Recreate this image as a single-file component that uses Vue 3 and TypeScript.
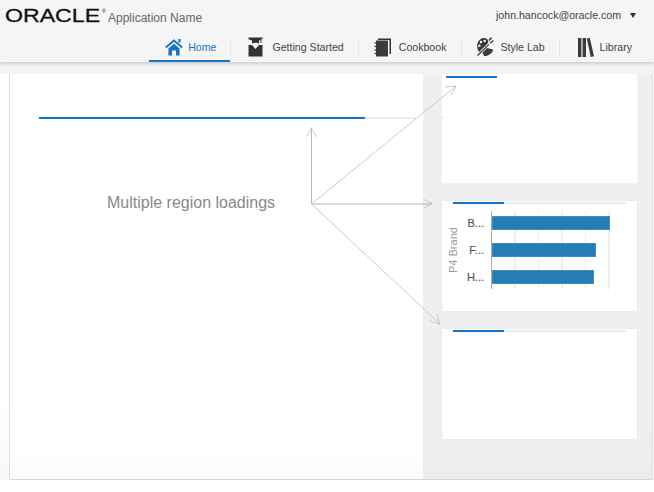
<script setup lang="ts">
interface NavItem { label: string; icon: string; active?: boolean }
const nav: NavItem[] = [
  { label: 'Home', icon: 'home', active: true },
  { label: 'Getting Started', icon: 'grad' },
  { label: 'Cookbook', icon: 'book' },
  { label: 'Style Lab', icon: 'palette' },
  { label: 'Library', icon: 'library' },
]
const bars = [
  { label: 'B...', width: 118 },
  { label: 'F...', width: 104 },
  { label: 'H...', width: 102 },
]
</script>

<template>
  <div class="page">
    <header class="header">
      <div class="top">
        <div class="brand">
          <span class="logo-box"><span class="logo">ORACLE</span><span class="reg">®</span></span>
          <span class="app-name">Application Name</span>
        </div>
        <div class="user">
          <span>john.hancock@oracle.com</span>
          <span class="caret"></span>
        </div>
      </div>
      <nav class="nav">
        <template v-for="(item, i) in nav" :key="item.label">
          <span v-if="i > 0" class="sep"></span>
          <a class="nav-item" :class="[item.icon, { active: item.active }]">
            <svg v-if="item.icon === 'home'" class="ico" width="18" height="18" viewBox="0 0 18 18">
              <path d="M0.8 9.4 L9 2.6 L17.2 9.4" fill="none" stroke="#1a73c8" stroke-width="2" />
              <path d="M3.4 10.4 L9 5.8 L14.6 10.4 V17.6 H11 V12.4 H7 V17.6 H3.4 Z" fill="#1a73c8" />
              <path d="M13.4 1 h2.2 v3.4 h-2.2 z" fill="#1a73c8" />
            </svg>
            <svg v-else-if="item.icon === 'grad'" class="ico" width="15" height="20" viewBox="0 0 15 20">
              <path d="M0.5 0.5 H14.5 V2 H13.5 V6 H12.5 V3 L11 3.6 V6.4 C9 5.4 6 5.4 4 6.4 V3.6 L0.5 2.200 Z" fill="#333" />
              <path d="M0.5 8 H4 L7.5 12 L11 8 H14.5 V19.5 H0.5 Z" fill="#333" />
            </svg>
            <svg v-else-if="item.icon === 'book'" class="ico" width="18" height="19" viewBox="0 0 18 19">
              <path d="M4 0.5 H17 V16 H15.5 V2 H4 Z" fill="#333" />
              <rect x="2" y="2.6" width="12" height="16" rx="0.5" fill="#3c3c3c" />
              <g fill="none" stroke="#333" stroke-width="1.2">
                <path d="M0.5 5 H4" /><path d="M0.5 8.5 H4" /><path d="M0.5 12 H4" /><path d="M0.5 15.5 H4" />
              </g>
            </svg>
            <svg v-else-if="item.icon === 'palette'" class="ico" width="18" height="20" viewBox="0 0 18 20">
              <path d="M7 1 C11 0.5 13 3 12 6 L10 8.5 L3 15 C0.5 12 -0.5 3 7 1 Z" fill="#3a3a3a" />
              <path d="M8 19 C12 19.5 17 16 17 12.5 L11 11 L6.5 15.5 Z" fill="#3a3a3a" />
              <circle cx="5" cy="5" r="1.2" fill="#f5f5f5" />
              <circle cx="8.6" cy="4" r="1.2" fill="#f5f5f5" />
              <circle cx="3.4" cy="8.8" r="1.2" fill="#f5f5f5" />
              <path d="M1.5 18.5 L13 7" stroke="#f5f5f5" stroke-width="2.4" />
              <path d="M1.5 18.5 L13 7.4" stroke="#3a3a3a" stroke-width="1.2" />
              <path d="M14 6 L17.5 3.5 M13 3.5 L15.500 0.5" stroke="#3a3a3a" stroke-width="1.5" />
            </svg>
            <svg v-else class="ico" width="16" height="19" viewBox="0 0 16 19">
              <rect x="0" y="0" width="3.4" height="19" fill="#3a3a3a" />
              <rect x="4.6" y="0" width="3.4" height="19" fill="#3a3a3a" />
              <path d="M8.8 0.6 L11.8 0 L16 18.2 L12.8 19 Z" fill="#3a3a3a" />
            </svg>
            <span>{{ item.label }}</span>
          </a>
        </template>
      </nav>
    </header>

    <div class="band"></div>

    <main class="content">
      <section class="main-panel">
        <div class="progress main-progress"><span class="fill"></span></div>
        <p class="caption">Multiple region loadings</p>
      </section>
      <aside class="side">
        <div class="card first">
          <div class="progress first-progress"><span class="fill"></span></div>
        </div>
        <div class="card">
          <div class="progress"><span class="fill"></span></div>
          <div class="chart">
            <span class="axis-title">P4 Brand</span>
            <div class="labels">
              <span v-for="b in bars" :key="b.label">{{ b.label }}</span>
            </div>
            <div class="plot">
              <span v-for="b in bars" :key="b.label" class="bar" :style="{ width: b.width + 'px' }"></span>
            </div>
          </div>
        </div>
        <div class="card">
          <div class="progress"><span class="fill"></span></div>
        </div>
      </aside>
    </main>

    <svg class="arrows" width="654" height="492" viewBox="0 0 654 492" fill="none" stroke="#b5b5b5">
      <path d="M311.5 204 V127.500" stroke-width="1" />
      <path d="M306.500 137 L311.500 128 L316.500 137" stroke-width="0.7" />
      <path d="M311.500 204 L456 86" stroke-width="0.7" />
      <path d="M445 87 L456 86 L451 95" stroke-width="0.7" />
      <path d="M311.500 204 H432" stroke-width="1" />
      <path d="M423 199 L432 203.500 L423 208.500" stroke-width="0.7" />
      <path d="M311.500 204 L440 324" stroke-width="0.7" />
      <path d="M429 321 L440 324 L437 314" stroke-width="0.7" />
      <path d="M441 118 H444" stroke="#ececec" stroke-width="2" />
    </svg>
  </div>
</template>

<style>
html, body { margin: 0; background: #fff; }
</style>

<style scoped>
.page {
  position: relative;
  width: 654px;
  height: 492px;
  overflow: hidden;
  background: linear-gradient(to bottom, #fff 0, #fff 400px, #f8f8f8 480px, #fff 480px);
  font-family: "Liberation Sans", Arial, sans-serif;
  display: flex;
  flex-direction: column;
}
.header {
  height: 62px;
  flex: none;
  background: #f5f5f5;
  box-shadow: 0 1px 4px rgba(0, 0, 0, 0.22);
  position: relative;
  z-index: 1;
}
.top {
  height: 32px;
  display: flex;
  justify-content: space-between;
  padding: 0 18px 0 6px;
}
.brand { display: flex; align-items: flex-start; }
.logo-box { width: 102px; height: 32px; position: relative; flex: none; }
.logo {
  display: block;
  margin: 5px 0 0 -1px;
  font-size: 18.500px;
  line-height: 22px;
  color: #111;
  transform: scaleX(1.25);
  transform-origin: left center;
  -webkit-text-stroke: 0.3px #111;
}
.reg {
  position: absolute;
  left: 96px;
  top: 8px;
  font-size: 5px;
  line-height: 6px;
  color: #222;
}
.app-name {
  margin-top: 11px;
  font-size: 12px;
  line-height: 14px;
  color: #666;
}
.user {
  display: flex;
  align-items: flex-start;
  gap: 9px;
  padding-top: 9px;
  font-size: 10.600px;
  line-height: 13px;
  color: #444;
}
.caret {
  margin-top: 4px;
  width: 0;
  height: 0;
  border-left: 3.5px solid transparent;
  border-right: 3.5px solid transparent;
  border-top: 5px solid #333;
}
.nav {
  height: 30px;
  display: flex;
  align-items: center;
  justify-content: flex-end;
  padding-right: 8px;
}
.nav-item {
  height: 30px;
  box-sizing: border-box;
  padding: 0 14px;
  display: flex;
  align-items: center;
  font-size: 10.600px;
  color: #444;
}
.ico { flex: none; display: block; }
.nav-item.home { padding-left: 16px; }
.nav-item.home .ico { margin-right: 5px; }
.nav-item.grad { padding-left: 17px; }
.nav-item.grad .ico { margin-right: 9px; }
.nav-item.book { padding: 0 15px; }
.nav-item.book .ico { margin-right: 7px; }
.nav-item.palette { padding-left: 14px; }
.nav-item.palette .ico { margin-right: 6px; }
.nav-item.library { padding-left: 18px; }
.nav-item.library .ico { margin-right: 6px; }
.nav-item.active {
  color: #1a73c8;
  box-shadow: inset 0 -2px 0 #1a73c8;
}
.sep { width: 1px; height: 18px; background: #e6e6e6; flex: none; }
.band {
  height: 12px;
  flex: none;
  background: repeating-linear-gradient(45deg, #f4f4f4 0 1px, #f1f1f1 1px 2px);
}
.content {
  height: 406px;
  flex: none;
  margin-left: 9px;
  width: 644px;
  box-sizing: border-box;
  display: flex;
  border-left: 1px solid #ddd;
  border-right: 1px solid #ddd;
  border-bottom: 1px solid #d6d6d6;
  border-radius: 0 0 2px 2px;
}
.main-panel {
  width: 413px;
  flex: none;
  box-sizing: border-box;
  padding: 43px 7px 0 29px;
  background: linear-gradient(to bottom, #fff 0, #fff 94%, #fbfbfb 100%);
}
.progress {
  height: 2px;
  background: #ececec;
  display: flex;
}
.fill { display: block; height: 2px; background: #1375d1; }
.main-progress .fill { width: 326px; }
.caption {
  margin: 75px 0 0 68px;
  font-size: 16px;
  line-height: 18px;
  color: #888;
}
.side {
  flex: 1;
  box-sizing: border-box;
  padding: 0 14px 0 18px;
  display: flex;
  flex-direction: column;
  gap: 16px;
  background: linear-gradient(to bottom, #efefef 0, #efefef 94%, #ebebeb 100%);
}
.card {
  height: 112px;
  flex: none;
  box-sizing: border-box;
  background: #fff;
  border: 1px solid #ebebeb;
  border-radius: 2px;
  padding: 1px 11px 0;
}
.card.first {
  height: 110px;
  border-top: 0;
  border-color: #f5f1ee;
  padding: 2px 4px 0;
}
.first-progress { background: transparent; }
.first-progress .fill { width: 50px; }
.card .fill { width: 51px; }
.chart {
  display: flex;
  align-items: flex-start;
  height: 90px;
  margin-top: 7px;
}
.axis-title {
  writing-mode: vertical-rl;
  transform: rotate(180deg);
  width: 14px;
  height: 78px;
  text-align: center;
  font-size: 11px;
  line-height: 14px;
  color: #999;
  flex: none;
  margin-left: -7px;
}
.labels {
  flex: none;
  width: 24px;
  box-sizing: border-box;
  padding-top: 5px;
  display: flex;
  flex-direction: column;
  gap: 13px;
  text-align: right;
  font-size: 11px;
  line-height: 14px;
  color: #555;
  -webkit-text-stroke: 0.2px #555;
}
.plot {
  margin-left: 7px;
  width: 119px;
  height: 78px;
  flex: none;
  box-sizing: border-box;
  padding-top: 5px;
  border-left: 1px solid #a8a8a8;
  display: flex;
  flex-direction: column;
  gap: 13px;
  background: repeating-linear-gradient(to right, transparent 0 22px, #eeeef2 22px 23.5px);
}
.bar {
  display: block;
  height: 14px;
  flex: none;
  background: #267db3;
  box-shadow: inset 0 0 0 0.5px #5a9cc6;
}
.arrows {
  position: absolute;
  left: 0;
  top: 0;
  z-index: 2;
  pointer-events: none;
}
</style>
